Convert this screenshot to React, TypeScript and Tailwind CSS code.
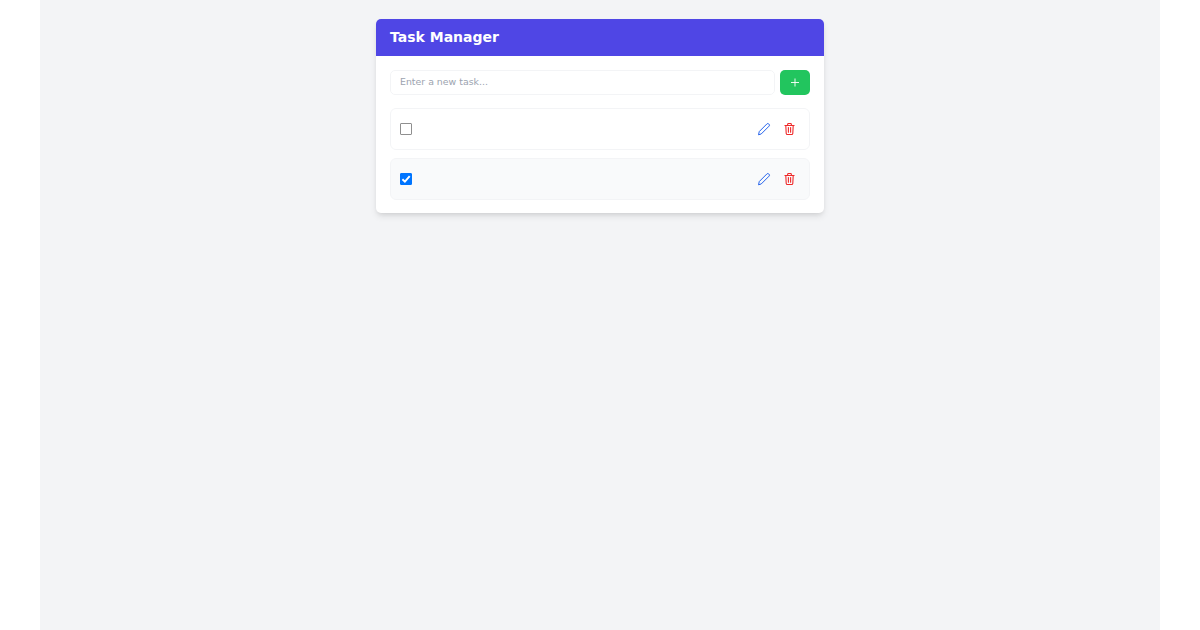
const font = "font-['DejaVu_Sans',sans-serif]";

function PencilIcon() {
  return (
    <svg width="14" height="14" viewBox="0 0 14 14" fill="none" stroke="#2563eb" strokeWidth="1" strokeLinejoin="round" strokeLinecap="round">
      <path d="M1.6 12.4 L2.3 9.5 L9.9 1.9 Q10.8 1.1 11.7 1.9 L12.1 2.3 Q12.9 3.2 12.1 4.1 L4.5 11.7 Z" />
    </svg>
  );
}

function TrashIcon() {
  return (
    <svg width="14" height="14" viewBox="0 0 14 14" fill="none" stroke="#ef2a2a" strokeWidth="1.1" strokeLinejoin="round" strokeLinecap="round">
      <path d="M2.9 3.5 H12.1" />
      <path d="M5.6 3.2 V2.4 Q5.6 1.5 6.5 1.5 H8.5 Q9.4 1.5 9.4 2.4 V3.2" />
      <path d="M3.8 3.6 L4.2 11.4 Q4.3 12.5 5.3 12.5 H9.7 Q10.7 12.5 10.8 11.4 L11.2 3.6" />
      <path d="M6.4 5.6 V10.3" />
      <path d="M8.6 5.6 V10.3" />
    </svg>
  );
}

function Row({ done }: { done: boolean }) {
  return (
    <div className={`flex h-[42px] items-center justify-between rounded-[6px] border border-[#f3f4f6] px-[9px] ${done ? "bg-[#f9fafb]" : "bg-white"}`}>
      <span className="relative flex h-3 w-3">
        <input
          type="checkbox"
          defaultChecked={done}
          className="h-3 w-3 appearance-none rounded-[1px] border border-[#8f8f8f] bg-white checked:border-[#0075ff] checked:bg-[#0075ff]"
        />
        {done && (
          <svg className="absolute left-0 top-0" width="12" height="12" viewBox="0 0 12 12" fill="none" stroke="white" strokeWidth="1.9">
            <path d="M2.4 6.3 L4.9 8.7 L9.7 3.2" />
          </svg>
        )}
      </span>
      <div className="flex items-center gap-[11.5px] pr-[4px]">
        <PencilIcon />
        <TrashIcon />
      </div>
    </div>
  );
}

export default function App() {
  return (
    <div className={`min-h-[630px] bg-white ${font}`}>
      <div className="mx-auto min-h-[630px] w-[1120px] bg-[#f3f4f6] pt-[19px]">
        <div className="mx-auto w-[448px] overflow-hidden rounded-[5px] bg-white shadow-[0_4px_7px_-1px_rgba(0,0,0,0.1),0_2px_5px_-2px_rgba(0,0,0,0.1)]">
          <div className="flex h-[37px] items-center bg-[#4f46e5] px-[14px] pb-[2px]">
            <h1 className="text-[14px] font-bold leading-none text-white">Task Manager</h1>
          </div>
          <div className="px-[14px] pb-[13px] pt-[14px]">
            <div className="mb-[13px] flex gap-[5px]">
              <input
                placeholder="Enter a new task..."
                className="h-[25px] flex-1 rounded-[5px] border border-[#f3f4f6] bg-white px-[9px] pb-[2px] text-[9.4px] outline-none placeholder:text-[#9ca3af]"
              />
              <button className="flex h-[25px] w-[30px] items-center justify-center rounded-[5px] bg-[#22c55e]">
                <svg width="10" height="10" viewBox="0 0 10 10" fill="none" stroke="#ffffff" strokeOpacity="0.9" strokeWidth="1">
                  <path d="M1 4.5 H9 M5 0.5 V8.5" />
                </svg>
              </button>
            </div>
            <div className="flex flex-col gap-2">
              <Row done={false} />
              <Row done={true} />
            </div>
          </div>
        </div>
      </div>
    </div>
  );
}
